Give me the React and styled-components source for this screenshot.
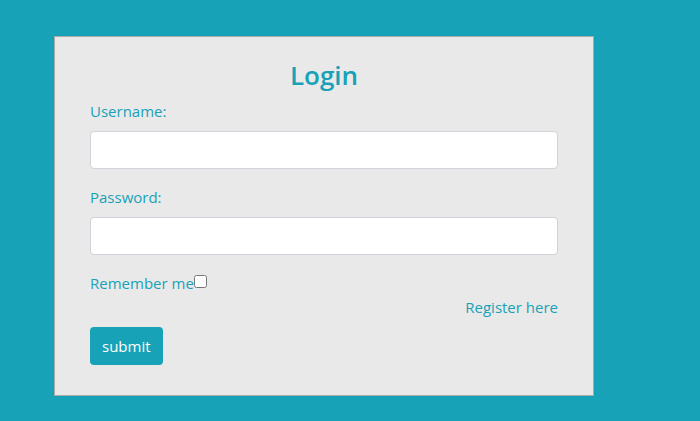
import React from "react"
import styled, { createGlobalStyle } from "styled-components"

const GlobalStyle = createGlobalStyle`
  html, body {
    margin: 0;
    padding: 0;
    background: #18a2b8;
    font-family: "Open Sans", "Noto Sans", sans-serif;
  }
`

const Page = styled.div`
  min-height: 421px;
  padding: 36px 0 0 54px;
  box-sizing: border-box;
`

const Card = styled.form`
  width: 540px;
  box-sizing: border-box;
  background: #e9e9e9;
  border: 1px solid #a9a9a9;
  padding: 20px 35px 30px;
  display: flex;
  flex-direction: column;
`

const Title = styled.h2`
  margin: 0 0 8px;
  text-align: center;
  font-size: 26px;
  line-height: 36px;
  font-weight: 600;
  color: #17a2b8;
`

const Label = styled.label`
  font-size: 15px;
  line-height: 20px;
  color: #17a2b8;
  margin-bottom: ${(p) => p.$gap || 0}px;
`

const Input = styled.input`
  height: 38px;
  box-sizing: border-box;
  border: 1px solid #ced4da;
  border-radius: 4px;
  background: #fff;
  margin-bottom: 18px;
  padding: 6px 12px;
  font-size: 15px;
  outline: none;
`

const CheckRow = styled.div`
  display: flex;
  align-items: center;
`

const Check = styled.input`
  margin: 0 0 4px;
  width: 13px;
  height: 13px;
`

const RegisterLink = styled.a`
  align-self: flex-end;
  margin-top: 4px;
  font-size: 15px;
  line-height: 20px;
  color: #17a2b8;
  text-decoration: none;
`

const Submit = styled.button`
  align-self: flex-start;
  margin-top: 10px;
  height: 38px;
  padding: 0 12px;
  border: none;
  border-radius: 4px;
  background: #17a2b8;
  color: #fff;
  font-family: inherit;
  font-size: 15px;
`

const App = () => {
  return (
    <>
      <GlobalStyle />
      <Page>
        <Card onSubmit={(e) => e.preventDefault()}>
          <Title>Login</Title>
          <Label $gap={10}>Username:</Label>
          <Input type="text" />
          <Label $gap={10}>Password:</Label>
          <Input type="password" />
          <CheckRow>
            <Label>Remember me</Label>
            <Check type="checkbox" />
          </CheckRow>
          <RegisterLink href="#">Register here</RegisterLink>
          <Submit type="submit">submit</Submit>
        </Card>
      </Page>
    </>
  )
}

export default App
